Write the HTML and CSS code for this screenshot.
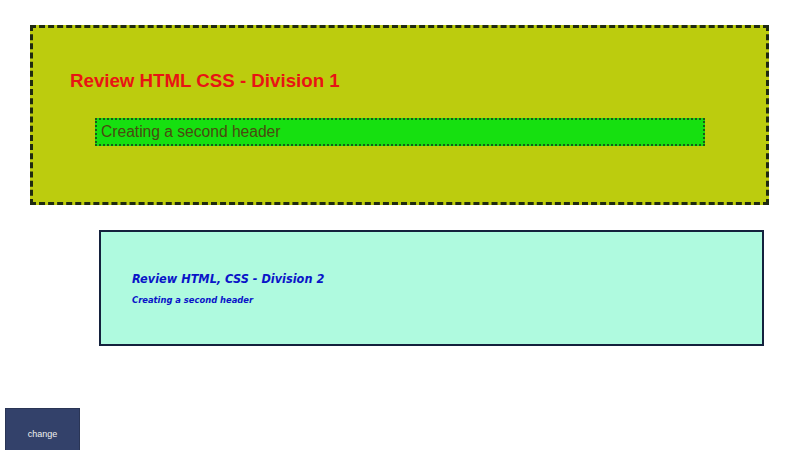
FILE: index.html
```html
<!DOCTYPE html>
<html>
<head>
<meta charset="utf-8">
<link rel="stylesheet" href="styles.css">
</head>
<body>
<div class="div1">
  <h1 class="title1">Review HTML CSS - Division 1</h1>
  <h2 class="sub1">Creating a second header</h2>
</div>
<div class="div2">
  <h1 class="title2">Review HTML, CSS - Division 2</h1>
  <h2 class="sub2">Creating a second header</h2>
</div>
<button class="change">change</button>
</body>
</html>
```
FILE: styles.css
```css
html, body {
  margin: 0;
  padding: 0;
  background: #ffffff;
}
body {
  font-family: "Liberation Sans", Arial, sans-serif;
  overflow: hidden;
}
.div1 {
  box-sizing: border-box;
  margin: 25px 31px 0 30px;
  height: 180px;
  background: #bccc0e;
  border: 3px dashed #1f2a10;
  padding: 41px 0 0 37px;
}
.title1 {
  margin: 0;
  color: #e81414;
  font-size: 18.7px;
  font-weight: bold;
  line-height: 24px;
}
.sub1 {
  margin: 25px 61px 0 25px;
  box-sizing: border-box;
  height: 28px;
  background: #16e010;
  border: 2px dotted #1a5a1a;
  color: #4a4a10;
  font-size: 15.6px;
  font-weight: normal;
  line-height: 24px;
  padding: 0 0 0 4px;
}
.div2 {
  box-sizing: border-box;
  margin: 25px 36px 0 99px;
  height: 116px;
  background: #affadf;
  border: 2px solid #14213d;
  padding: 38px 0 0 31px;
  font-family: "DejaVu Sans Condensed", "DejaVu Sans", Verdana, sans-serif;
  font-style: italic;
  font-weight: bold;
  color: #0a14c8;
}
.title2 {
  margin: 0;
  font-size: 12.6px;
  line-height: 18px;
  font-weight: bold;
}
.sub2 {
  margin: 5px 0 0 0;
  font-size: 9.3px;
  line-height: 14px;
  font-weight: bold;
}
.change {
  display: block;
  margin: 62px 0 0 5px;
  width: 75px;
  height: 52px;
  background: #33416a;
  border: 1px solid #2a3555;
  color: #f0f0f0;
  font-family: "Liberation Sans", Arial, sans-serif;
  font-size: 9px;
  padding: 0;
}
```
